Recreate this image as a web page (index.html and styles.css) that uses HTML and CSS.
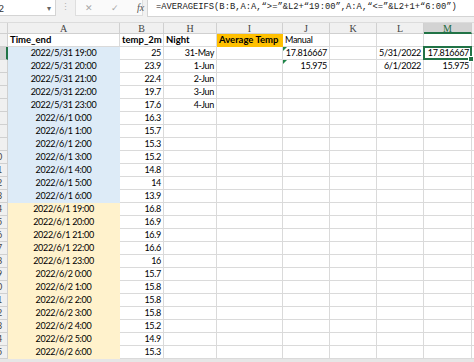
FILE: index.html
```html
<!DOCTYPE html>
<html lang="en">
<head>
  <meta charset="UTF-8" />
  <title>Night average temperature</title>
  <link rel="stylesheet" href="styles.css">
</head>
<body>

  <div class="formula-bar">
    <div class="name-box"><span>M2</span><span class="caret">▾</span></div>
    <span class="grip">⋮</span>
    <div class="fx-buttons">
      <span class="btn-x">✕</span>
      <span class="btn-ok">✓</span>
      <span class="btn-fx">fx</span>
    </div>
    <div class="formula">=AVERAGEIFS(B:B,A:A,“&gt;=”&amp;L2+“19:00”,A:A,“&lt;=”&amp;L2+1+“6:00”)</div>
  </div>

  <div class="sheet" id="sheet"></div>

  <script>
    const letters = ["A", "B", "H", "I", "J", "K", "L", "M", ""];

    // A, B, H, I, J, K, L, M
    const rows = [
      ["Time_end", "temp_2m", "Night", "Average Temp", "Manual", "", "", ""],
      ["2022/5/31 19:00", "25", "31-May", "", "17.816667", "", "5/31/2022", "17.816667"],
      ["2022/5/31 20:00", "23.9", "1-Jun", "", "15.975", "", "6/1/2022", "15.975"],
      ["2022/5/31 21:00", "22.4", "2-Jun"],
      ["2022/5/31 22:00", "19.7", "3-Jun"],
      ["2022/5/31 23:00", "17.6", "4-Jun"],
      ["2022/6/1 0:00", "16.3"],
      ["2022/6/1 1:00", "15.7"],
      ["2022/6/1 2:00", "15.3"],
      ["2022/6/1 3:00", "15.2"],
      ["2022/6/1 4:00", "14.8"],
      ["2022/6/1 5:00", "14"],
      ["2022/6/1 6:00", "13.9"],
      ["2022/6/1 19:00", "16.8"],
      ["2022/6/1 20:00", "16.9"],
      ["2022/6/1 21:00", "16.9"],
      ["2022/6/1 22:00", "16.6"],
      ["2022/6/1 23:00", "16"],
      ["2022/6/2 0:00", "15.7"],
      ["2022/6/2 1:00", "15.8"],
      ["2022/6/2 2:00", "15.8"],
      ["2022/6/2 3:00", "15.8"],
      ["2022/6/2 4:00", "15.2"],
      ["2022/6/2 5:00", "14.9"],
      ["2022/6/2 6:00", "15.3"]
    ];

    const sheet = document.getElementById("sheet");

    function addCell(text, cls) {
      const el = document.createElement("div");
      el.className = "cell " + cls;
      el.textContent = text;
      sheet.appendChild(el);
      return el;
    }

    // column headers
    addCell("", "corner");
    letters.forEach(l => addCell(l, "col-head" + (l === "M" ? " active" : "")));

    rows.forEach((row, r) => {
      const num = r + 1;
      const head = addCell("", "row-head" + (num === 2 ? " active" : ""));
      head.innerHTML = "<span>" + num + "</span>";

      for (let c = 0; c < letters.length; c++) {
        const text = row[c] || "";
        let cls = "";
        if (num === 1) {
          cls = c < 4 ? "bold" : "";
          if (c === 3) cls += " orange";
        } else {
          if (c === 0) cls = "center " + (num <= 13 ? "blue" : "yellow");
          else if (text) cls = "num";
          if (c === 4 && num <= 3) cls += " flag";
          if (c === 7 && num === 2) cls += " selected";
        }
        addCell(text, cls);
      }
    });
  </script>

</body>
</html>
```

FILE: styles.css
```css
body {
  margin: 0;
  background: #e6e6e6;
  font-family: Lato, "Open Sans", sans-serif;
  font-size: 9px;
  letter-spacing: -0.3px;
  color: #000;
  overflow: hidden;
}

/* ---------- formula bar ---------- */

.formula-bar {
  display: flex;
  align-items: flex-start;
  height: 23px;
  background: #f1f1f1;
  border-bottom: 1px solid #dcdcdc;
  box-sizing: border-box;
  letter-spacing: 0;
}

.name-box {
  width: 73px;
  height: 16px;
  margin-left: -17px;
  padding: 0 4px 0 5px;
  box-sizing: border-box;
  background: #fff;
  border: 1px solid #d4d4d4;
  border-top: none;
  display: flex;
  justify-content: space-between;
  align-items: center;
  font-size: 10px;
  color: #333;
}

.caret {
  font-size: 8px;
  color: #666;
}

.grip {
  width: 18px;
  text-align: center;
  color: #b0b0b0;
  font-size: 9px;
  line-height: 14px;
}

.fx-buttons {
  width: 68px;
  height: 16px;
  margin-left: 1px;
  box-sizing: border-box;
  background: #fafafa;
  border: 1px solid #dedede;
  border-top: none;
  display: flex;
  align-items: center;
  padding-left: 9px;
  gap: 18px;
  color: #a8a8a8;
  font-size: 9px;
}

.btn-fx {
  font-family: "Liberation Serif", serif;
  font-style: italic;
  color: #555;
  font-size: 10px;
}

.formula {
  flex: 1;
  height: 16px;
  margin-left: 4px;
  padding-left: 8px;
  background: #fff;
  border: 1px solid #d4d4d4;
  border-top: none;
  border-right: none;
  font-family: "Liberation Mono", monospace;
  font-size: 8.8px;
  line-height: 14px;
  color: #222;
  white-space: nowrap;
  overflow: hidden;
}

/* ---------- grid ---------- */

.sheet {
  display: grid;
  grid-template-columns: 8px 112px 44px 53px 66px 47px 47px 47px 48px 10px;
  grid-template-rows: 11px repeat(25, 13px);
  background: #fff;
}

.cell {
  border-right: 1px solid #dadada;
  border-bottom: 1px solid #dadada;
  box-sizing: border-box;
  padding: 0 2px;
  line-height: 12px;
  white-space: nowrap;
  overflow: hidden;
  position: relative;
}

.corner,
.col-head,
.row-head {
  background: #f0f0f0;
  border-color: #d0d0d0;
  color: #444;
  letter-spacing: 0;
}

.col-head {
  font-family: "Liberation Serif", serif;
  text-align: center;
  line-height: 11px;
  font-size: 10px;
}

.col-head.active {
  background: #d3d3d3;
  color: #1e6b40;
  border-bottom: 2px solid #217346;
}

.row-head {
  padding: 0;
  font-size: 9px;
}

.row-head span {
  display: block;
  width: 22px;
  margin-left: -14px;
  text-align: center;
}

.row-head.active {
  background: #d3d3d3;
  border-right: 2px solid #217346;
}

.bold {
  font-weight: 700;
  font-size: 9.5px;
  letter-spacing: 0;
}

.center {
  text-align: center;
}

.num {
  text-align: right;
}

.blue {
  background: #ddebf7;
  border-color: #ddebf7;
}

.yellow {
  background: #fff2cc;
  border-color: #fff2cc;
}

.orange {
  background: #ffc000;
  border-color: #ffc000;
}

/* green error triangle */
.flag::before {
  content: '';
  position: absolute;
  top: 0;
  left: 0;
  border-top: 4px solid #1e8449;
  border-right: 4px solid transparent;
}

.selected {
  overflow: visible;
}

.selected::after {
  content: '';
  position: absolute;
  inset: -1px;
  border: 2px solid #217346;
}

.selected::before {
  content: '';
  position: absolute;
  right: -3px;
  bottom: -3px;
  width: 4px;
  height: 4px;
  background: #217346;
  border: 1px solid #fff;
  z-index: 1;
}
```
